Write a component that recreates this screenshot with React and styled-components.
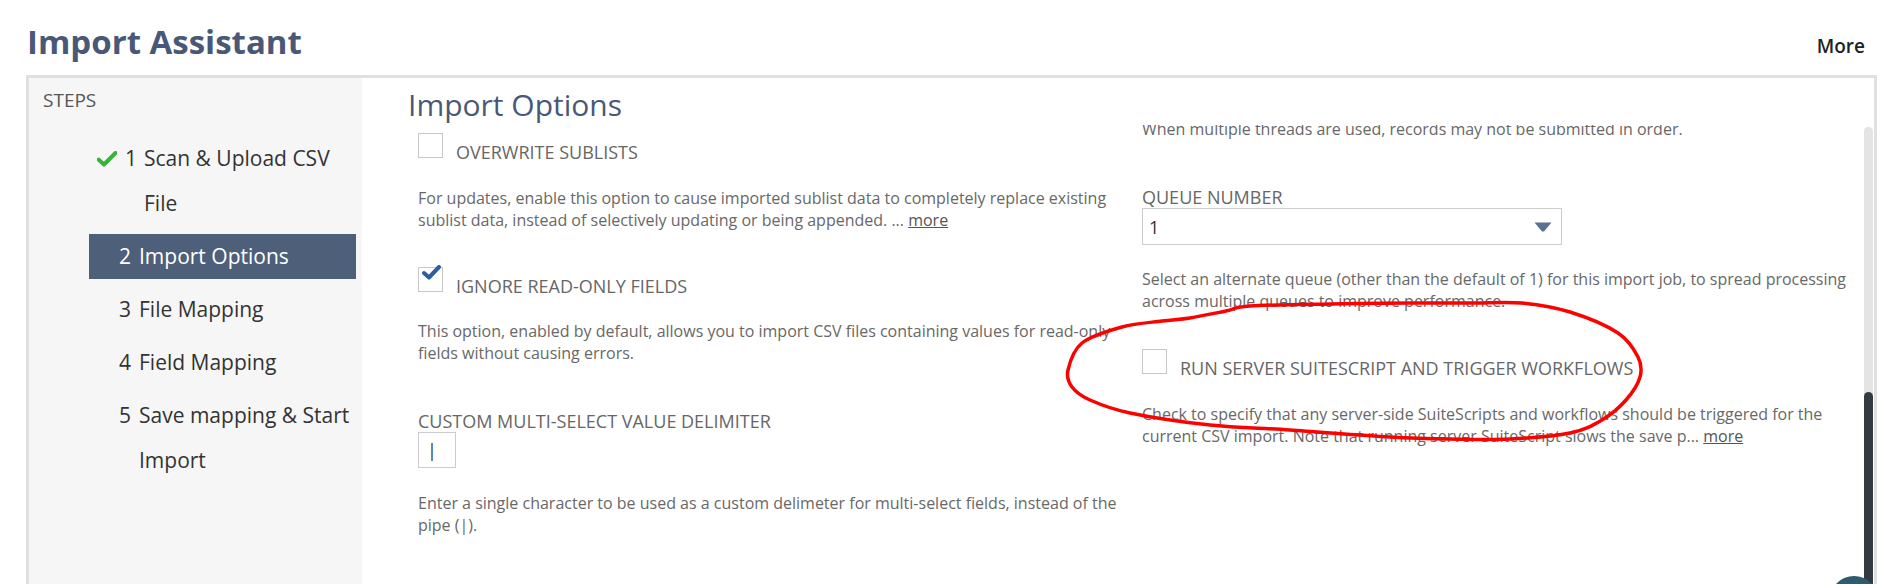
import React from 'react';
import styled, { createGlobalStyle } from 'styled-components';

const Global = createGlobalStyle`
  html, body { margin: 0; padding: 0; background: #fff; overflow: hidden; }
  body { font-family: "Open Sans", "Liberation Sans", sans-serif; }
  * { box-sizing: border-box; }
`;

const Page = styled.div`
  position: relative;
  width: 1881px;
  height: 584px;
  overflow: hidden;
  background: #fff;
`;

const Header = styled.header`
  display: flex;
  justify-content: space-between;
  align-items: flex-start;
  height: 75px;
  padding: 22px 16px 0 27px;
`;

const Title = styled.h1`
  margin: 0;
  font-size: 33px;
  line-height: 40px;
  font-weight: 700;
  color: #4a5877;
`;

const MoreLink = styled.span`
  margin-top: 12px;
  font-size: 19px;
  line-height: 24px;
  font-weight: 600;
  color: #222;
`;

const Frame = styled.div`
  display: flex;
  margin: 0 4px 0 26px;
  height: 509px;
  border: 3px solid #e0e0e0;
  border-bottom: none;
`;

const Sidebar = styled.aside`
  width: 333px;
  flex: none;
  background: #f6f6f6;
  padding-top: 10px;
`;

const StepsLabel = styled.div`
  padding-left: 14px;
  font-size: 19px;
  line-height: 24px;
  color: #555;
  margin-bottom: 24px;
`;

const StepList = styled.ul`
  list-style: none;
  margin: 0;
  padding: 0;
`;

const StepItem = styled.li`
  display: flex;
  align-items: flex-start;
  margin: 0 6px 8px 60px;
  padding-left: 8px;
  font-size: 21px;
  line-height: 45px;
  color: ${p => (p.$active ? '#fff' : '#333')};
  background: ${p => (p.$active ? '#4e5f7a' : 'transparent')};
`;

const StepMark = styled.span`
  flex: none;
  width: ${p => (p.$done ? 28 : 22)}px;
  height: 45px;
  display: flex;
  align-items: center;
`;

const StepNum = styled.span`
  flex: none;
  width: ${p => (p.$done ? 19 : 20)}px;
`;

const StepText = styled.span`
  flex: 1;
`;

const Main = styled.main`
  flex: 1;
  min-width: 0;
  display: flex;
  flex-direction: column;
  background: #fff;
`;

const Heading = styled.h2`
  margin: 0;
  padding: 7px 0 0 46px;
  height: 47px;
  font-size: 30px;
  line-height: 40px;
  font-weight: 400;
  color: #4a5877;
`;

const Body = styled.div`
  flex: 1;
  display: flex;
  min-height: 0;
`;

const Viewport = styled.div`
  flex: 1;
  overflow: hidden;
  padding-left: 56px;
`;

const Columns = styled.div`
  display: grid;
  grid-template-columns: 710px 710px;
  column-gap: 14px;
  align-items: start;
`;

const Column = styled.div`
  display: flex;
  flex-direction: column;
`;

const Field = styled.div`
  margin-top: ${p => p.$top || 0}px;
`;

const CheckRow = styled.div`
  display: flex;
  align-items: flex-end;
  gap: 13px;
`;

const Box = styled.div`
  flex: none;
  width: 25px;
  height: 25px;
  border: 1px solid #c8c8c8;
  background: #fff;
  overflow: visible;
  svg { display: block; margin: -3px 0 0 3px; }
`;

const Label = styled.div`
  font-size: 18px;
  line-height: 20px;
  color: #666;
  text-transform: uppercase;
  margin-bottom: ${p => (p.$check ? -4 : 0)}px;
`;

const Desc = styled.p`
  margin: ${p => p.$top || 0}px 0 0;
  font-size: 16px;
  line-height: 22px;
  color: #686868;
`;

const MoreInline = styled.span`
  text-decoration: underline;
  color: #555;
`;

const TextInput = styled.div`
  margin-top: 1px;
  width: 38px;
  height: 36px;
  border: 1px solid #ccc;
  padding-left: 8px;
  font-size: 18px;
  line-height: 34px;
  color: #333;
`;

const Select = styled.div`
  margin-top: 1px;
  width: 420px;
  height: 37px;
  border: 1px solid #ccc;
  display: flex;
  align-items: center;
  justify-content: space-between;
  padding: 0 9px 0 6px;
  font-size: 18px;
  color: #333;
`;

const ScrollTrack = styled.div`
  flex: none;
  width: 9px;
  margin: 2px 1px 0 0;
  border-radius: 5px 5px 0 0;
  background: #e4e4e4;
  display: flex;
  flex-direction: column;
`;

const ScrollThumb = styled.div`
  margin-top: 265px;
  flex: 1;
  border-radius: 5px 5px 0 0;
  background: #343a42;
`;

const Bubble = styled.div`
  position: absolute;
  left: 1830px;
  top: 576px;
  width: 48px;
  height: 48px;
  border-radius: 50%;
  background: #2e5b6d;
`;

const Overlay = styled.svg`
  position: absolute;
  left: 0;
  top: 0;
  pointer-events: none;
`;

const GreenCheck = () => (
  <svg width="20" height="16" viewBox="0 0 20 16">
    <path d="M1.5 8.5 L7 13.5 L18.5 2" fill="none" stroke="#35b535" strokeWidth="4" strokeLinecap="round" strokeLinejoin="round" />
  </svg>
);

const BlueCheck = () => (
  <svg width="19" height="15" viewBox="0 0 19 15">
    <path d="M2 8 L7 12.5 L17 2" fill="none" stroke="#2d5ea3" strokeWidth="4" strokeLinecap="round" strokeLinejoin="round" />
  </svg>
);

const Arrow = () => (
  <svg width="18" height="10" viewBox="0 0 18 10">
    <path d="M0.5 0.5 H17.5 L10 9.5 H8 Z" fill="#5a7191" />
  </svg>
);

const ellipsePts = [
  [1190, 318], [1226, 311], [1250, 306], [1330, 304], [1410, 303], [1470, 303], [1522, 303],
  [1570, 312], [1618, 333], [1638, 357], [1640, 377], [1626, 400], [1602, 420], [1570, 433],
  [1510, 439], [1450, 439], [1390, 437], [1290, 430], [1210, 425], [1130, 413], [1090, 400],
  [1072, 387], [1068, 370], [1082, 343], [1122, 327], [1162, 321],
];

function smoothPath(pts) {
  const n = pts.length;
  let d = `M${pts[0][0]} ${pts[0][1]}`;
  for (let i = 0; i < n; i++) {
    const p0 = pts[(i - 1 + n) % n];
    const p1 = pts[i];
    const p2 = pts[(i + 1) % n];
    const p3 = pts[(i + 2) % n];
    const c1 = [p1[0] + (p2[0] - p0[0]) / 6, p1[1] + (p2[1] - p0[1]) / 6];
    const c2 = [p2[0] - (p3[0] - p1[0]) / 6, p2[1] - (p3[1] - p1[1]) / 6];
    d += ` C${c1[0].toFixed(1)} ${c1[1].toFixed(1)} ${c2[0].toFixed(1)} ${c2[1].toFixed(1)} ${p2[0]} ${p2[1]}`;
  }
  return d;
}

const steps = [
  { n: '1', text: 'Scan & Upload CSV File', done: true },
  { n: '2', text: 'Import Options', active: true },
  { n: '3', text: 'File Mapping' },
  { n: '4', text: 'Field Mapping' },
  { n: '5', text: 'Save mapping & Start Import' },
];

export default function App() {
  return (
    <Page>
      <Global />
      <Header>
        <Title>Import Assistant</Title>
        <MoreLink>More</MoreLink>
      </Header>
      <Frame>
        <Sidebar>
          <StepsLabel>STEPS</StepsLabel>
          <StepList>
            {steps.map(s => (
              <StepItem key={s.n} $active={s.active}>
                <StepMark $done={s.done}>{s.done && <GreenCheck />}</StepMark>
                <StepNum $done={s.done}>{s.n}</StepNum>
                <StepText>{s.text}</StepText>
              </StepItem>
            ))}
          </StepList>
        </Sidebar>
        <Main>
          <Heading>Import Options</Heading>
          <Body>
            <Viewport>
              <Columns>
                <Column>
                  <Field $top={8}>
                    <CheckRow>
                      <Box />
                      <Label $check>Overwrite Sublists</Label>
                    </CheckRow>
                    <Desc $top={29}>
                      For updates, enable this option to cause imported sublist data to completely replace existing
                      sublist data, instead of selectively updating or being appended. ... <MoreInline>more</MoreInline>
                    </Desc>
                  </Field>
                  <Field $top={36}>
                    <CheckRow>
                      <Box><BlueCheck /></Box>
                      <Label $check>Ignore Read-Only Fields</Label>
                    </CheckRow>
                    <Desc $top={28}>
                      This option, enabled by default, allows you to import CSV files containing values for read-only
                      fields without causing errors.
                    </Desc>
                  </Field>
                  <Field $top={47}>
                    <Label>Custom Multi-Select Value Delimiter</Label>
                    <TextInput>|</TextInput>
                    <Desc $top={24}>
                      Enter a single character to be used as a custom delimeter for multi-select fields, instead of the
                      pipe (|).
                    </Desc>
                  </Field>
                </Column>
                <Column>
                  <Desc $top={-7}>When multiple threads are used, records may not be submitted in order.</Desc>
                  <Field $top={47}>
                    <Label>Queue Number</Label>
                    <Select>
                      <span>1</span>
                      <Arrow />
                    </Select>
                    <Desc $top={23}>
                      Select an alternate queue (other than the default of 1) for this import job, to spread processing
                      across multiple queues to improve performance.
                    </Desc>
                  </Field>
                  <Field $top={37}>
                    <CheckRow>
                      <Box />
                      <Label $check>Run Server SuiteScript and Trigger Workflows</Label>
                    </CheckRow>
                    <Desc $top={29}>
                      Check to specify that any server-side SuiteScripts and workflows should be triggered for the
                      current CSV import. Note that running server SuiteScript slows the save p... <MoreInline>more</MoreInline>
                    </Desc>
                  </Field>
                </Column>
              </Columns>
            </Viewport>
            <ScrollTrack>
              <ScrollThumb />
            </ScrollTrack>
          </Body>
        </Main>
      </Frame>
      <Bubble />
      <Overlay width="1881" height="584" viewBox="0 0 1881 584">
        <path d={smoothPath(ellipsePts)} fill="none" stroke="#ff0000" strokeWidth="3.5" strokeLinejoin="round" />
      </Overlay>
    </Page>
  );
}
